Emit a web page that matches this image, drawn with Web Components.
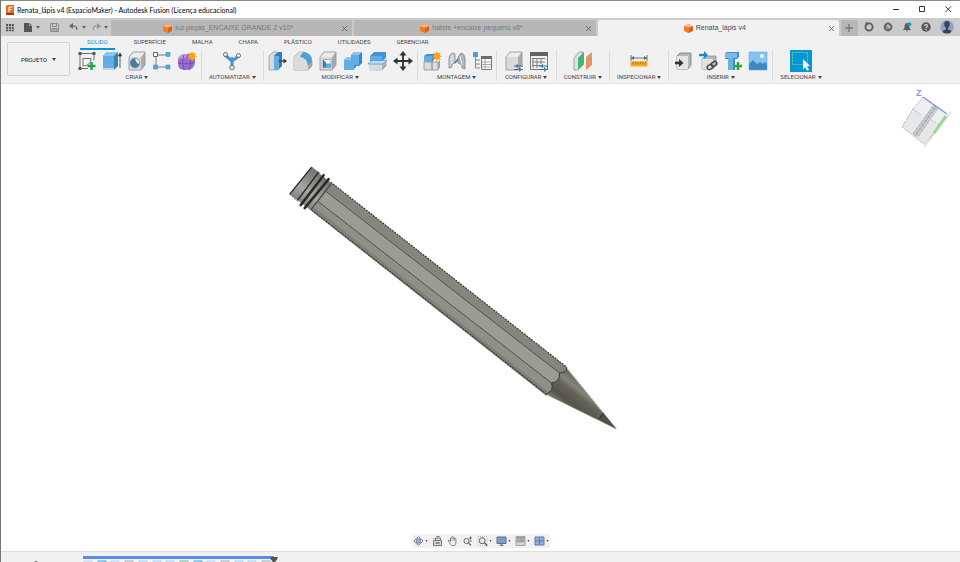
<!DOCTYPE html>
<html lang="pt-BR">
<head>
<meta charset="utf-8">
<title>Renata_lápis v4 (EspacioMaker) - Autodesk Fusion (Licença educacional)</title>
<style>
  html, body { height: 100%; margin: 0; }
  body { font-family: Roboto, "Liberation Sans", sans-serif; font-size: 6px; color: #444; background: #fff; overflow: hidden; }
</style>
</head>
<body>
<fusion-app></fusion-app>

<script>
const cube = (body) => `<path d="M2 6 6 1h12v13l-4 5H2z" fill="#a9abad"/><path d="M2 6h12v13H2z" fill="#d9dadb"/><path d="M2 6 6 1h12l-4 5z" fill="#ececec"/><path d="M2 6 6 1h12v13l-4 5H2z" fill="none" stroke="#8f9294" stroke-width=".8"/>${body || ''}`;
const plus = (x, y) => `<path d="M${x} ${y - 4}v8M${x - 4} ${y}h8" stroke="#22a447" stroke-width="2.4" fill="none"/>`;
const spark = '<path d="M15 0l1.1 2.5 2.6-1-1 2.600 2.300 1.100-2.300 1.100 1 2.600-2.600-1L15 10.400l-1.100-2.500-2.600 1 1-2.600L10 5.200l2.300-1.100-1-2.600 2.600 1z" fill="#f7a416"/>';
const sliders = '<path d="M10 15h9M10 18.500h9" stroke="#606469"/><path d="M14 12.500v5l-2.500-2.500zM15 16v5l3-2.500z" fill="#2f87c8"/>';

/* Each entry: [width, height, markup]; the view box has the same size. */
const ICONS = {
  sketch: [20, 20, '<path d="M3 2.500h14v7M3 2.500v15h8" stroke="#6d7072" fill="none" stroke-width="1"/><path d="M6 15V7.500h8c0 4-3 7.500-8 7.500z" fill="none" stroke="#6d7072"/><path d="M1.500 1h3v3h-3zM15.500 1h3v3h-3zM1.500 16h3v3h-3z" fill="#55585a"/><path d="M14.500 11v8M10.500 15h8" stroke="#22a447" stroke-width="2.400"/>'],
  extrude: [20, 20, '<path d="M1 5 5 1h11v14l-4 4H1z" fill="#3182bd"/><path d="M1 5h11v13H1z" fill="#62aee4"/><path d="M1 5 5 1h11l-4 4z" fill="#8dc6ef"/><path d="M1 17h11v2H1z" fill="#cfd1d2"/><path d="M18 17V3m-1.500 2L18 2l1.500 3z" stroke="#333" fill="#333" stroke-width=".8"/>'],
  hole: [20, 20, cube('<circle cx="8" cy="12" r="4.700" fill="#3c7fb1"/><path d="M8 7.300a4.700 4.700 0 0 1 4.600 5.500C10 13 8.500 10 8 7.300z" fill="#f8fafb"/><circle cx="8" cy="12" r="4.700" fill="none" stroke="#75797b" stroke-width=".7"/>')],
  pattern: [20, 20, '<path d="M4 4h12M4 4v12h12" fill="none" stroke="#777b7e"/><path d="M1.500 1.500h4v4h-4z" fill="#fff" stroke="#666"/><path d="M14 1.500h4v4h-4zM14 14h4v4h-4zM1.500 14h4v4h-4z" fill="#55a9e0" stroke="#3f8fc9" stroke-width=".6"/>'],
  form: [20, 20, '<path d="M1 8c1-4 5-5 9-5 6 0 8 2 8 7 0 6-3 9-9 9S1 17 1 12z" fill="#9a6bd3"/><path d="M1 8c1-4 5-5 9-5-1 3-1 3-2 4z" fill="#bd99e8"/><path d="M1 12c4 1 9 1 16 0M7 4c-2 5-1 10 0 15M12 4c2 5 2 10 0 15" fill="none" stroke="#6e42a8" stroke-width=".8"/>' + spark],
  automate: [20, 20, '<path d="M3 4l7 6 7-5M10 10v7" stroke="#4795cf" stroke-width="3" fill="none"/><path d="M10 6v6" stroke="#4795cf" stroke-width="2"/><g fill="#f7f7f7" stroke="#666"><circle cx="3.500" cy="3.500" r="2"/><circle cx="16.500" cy="4.500" r="2"/><circle cx="10" cy="16.500" r="2.300"/></g>'],
  press: [20, 20, '<path d="M1 5 5 1h4v18H1z" fill="#d7d9da" stroke="#8f9294" stroke-width=".7"/><path d="M6 5l4-4h4v14l-4 4H6z" fill="#2e7fbc"/><path d="M6 5h5v14H6z" fill="#62aee4"/><path d="M11 10h6" stroke="#333" stroke-width="1.200"/><path d="M15.500 7.500v5L19 10z" fill="#333"/>'],
  fillet: [20, 20, '<path d="M1 6 6 1h5q8 2 8 10v4l-4 4H1z" fill="#a9abad" stroke="#8f9294" stroke-width=".7"/><path d="M1 6 6 1h5L7 6q8 1 8 9v4H1z" fill="#dadbdc"/><path d="M10 1q9 1 9 10l-4 3Q14 7 7 5.500z" fill="#4da1dc"/>'],
  shell: [20, 20, cube('<path d="M5 8.500h8v8H5z" fill="#f6f6f6" stroke="#888" stroke-width=".6"/><path d="M5 8.500l3 3v5H5z" fill="#2e7fbc"/><path d="M8 12.500h5v4H8z" fill="#62aee4"/>')],
  combine: [20, 20, '<path d="M1 9l3-3h4V4l3-3h8v11l-3 3h-3v1l-3 3H1z" fill="#3787c6"/><path d="M1 9h7V4h8v10h-5v5H1z" fill="#62aee4"/><path d="M8 4l3-3h8l-3 3zM1 9l3-3h4v3z" fill="#8dc6ef"/>'],
  split: [20, 20, '<path d="M2 5 6 1h12v6l-4 3H2z" fill="#4295d3"/><path d="M2 5h12v4H2z" fill="#62aee4"/><path d="M2 14h12l4-4v5l-4 4H2z" fill="#b0b3b5" stroke="#8f9294" stroke-width=".6"/><path d="M2 14h12v5H2z" fill="#dadbdc"/><path d="M0 13l4-3.500h15L15 13H0z" fill="#b8ddf6" stroke="#4797d0" stroke-width=".7"/>'],
  move: [20, 20, '<path d="M10 3v14M3 10h14" stroke="#2f3234" stroke-width="1.800"/><path d="M10 0l3.500 4.500h-7zM10 20l3.500-4.500h-7zM0 10l4.500-3.500v7zM20 10l-4.500-3.500v7z" fill="#2f3234"/>'],
  component: [20, 20, '<path d="M2 11h8v8H2zM10 11h6v8h-6z" fill="#dcdddd" stroke="#8f9294" stroke-width=".8"/><path d="M16 11l2-2v7l-2 3z" fill="#9fa2a4"/><path d="M2 5l3-2h7v6l-2 2H2z" fill="#3e92d2"/><path d="M2 5h8v6H2z" fill="#62aee4"/>' + spark],
  joint: [20, 20, '<path d="M2 17V7q1-5 5-5l1 2v8l-3 1v3z" fill="#c9ccce" stroke="#888c8f" stroke-width=".9"/><path d="M18 18V7q-1-5-4-5l-3 4v6l4 2v3z" fill="#b3b7b9" stroke="#888c8f" stroke-width=".9"/><path d="M5 5v8M13 5l2 9" stroke="#eee"/><path d="M8 12l3-4" stroke="#2d7dba" stroke-width="1.400"/>'],
  bom: [20, 20, '<path d="M1 1h5v5H1z" fill="#4ba0dc"/><path d="M3.500 6v11H8M3.500 9H8M3.500 13H8" fill="none" stroke="#888"/><path d="M9.500 5.500h10v13h-10z" fill="#fff" stroke="#75797b"/><path d="M9 5h11v3H9z" fill="#696d70"/><path d="M9 11h10M9 13.500h10M9 16h10M13 8v10" stroke="#888" stroke-width=".7"/>'],
  config: [20, 20, cube(sliders)],
  table: [20, 20, '<path d="M1.500 1.500h17v17h-17z" fill="#eee" stroke="#777"/><path d="M1 1h18v4H1z" fill="#5f6366"/><path d="M3 7.500h13M3 11h13M3 14.500h9M4 7v10M8 7v10M12 7v6" stroke="#777" stroke-width=".9"/>' + sliders],
  plane: [20, 20, '<path d="M1 7l5-6h4v13l-5 5H1z" fill="#e0e1e1" stroke="#8f9294" stroke-width=".8"/><path d="M5 7l6-6v12l-6 6z" fill="#48b575"/><path d="M13 6l6-5v13l-6 5z" fill="#e29462"/>'],
  measure: [20, 20, '<path d="M2 4v6M18 4v6M2 7h16" stroke="#606469" stroke-width=".9"/><path d="M5 5L2 7l3 2zM15 5l3 2-3 2z" fill="#606469"/><path d="M1.500 10.500h17v5h-17z" fill="#f9a91a"/><path d="M4 10.500v3M6.500 10.500v2M9 10.500v3M11.500 10.500v2M14 10.500v3M16.500 10.500v2" stroke="#956514" stroke-width=".8"/>'],
  derive: [20, 20, '<path d="M4 5l3-3h11v12l-3 4H4z" fill="#b5b8ba" stroke="#777b7e" stroke-width=".8"/><path d="M4 5h11v13H4z" fill="#e4e5e5"/><path d="M2 12h6" stroke="#333" stroke-width="2.600"/><path d="M6 8v8l4.500-4z" fill="#333"/>'],
  insert: [20, 20, '<path d="M4 8l3-3h11v9l-3 4H4z" fill="#b5b8ba" stroke="#8f9294" stroke-width=".8"/><path d="M4 8h11v10H4z" fill="#dfe0e0"/><path d="M1 4h7" stroke="#1e88d2" stroke-width="2.400"/><path d="M6 0v8l4-4z" fill="#1e88d2"/><g fill="none" stroke="#444" stroke-width="1.400"><rect x="9" y="14" width="6" height="4" rx="2" transform="rotate(-35 12 16)"/><rect x="13" y="11" width="6" height="4" rx="2" transform="rotate(-35 16 13)"/></g>'],
  bolt: [20, 20, '<path d="M2 2l2-1h12v5l-2 2H2z" fill="#4390cd"/><path d="M2 2h12v5H2z" fill="#79bbe8"/><path d="M5 7h7v12H5z" fill="#69b1e2"/><path d="M10 7h2v12h-2z" fill="#3e8dc8"/>' + plus(15, 15)],
  image: [20, 20, '<path d="M1 1h18v18H1z" fill="#82c3f2"/><path d="M1 13l4-4 4 4 3-2 3 2 2-2 2 2v6H1z" fill="#3c8ac4"/><circle cx="14" cy="5" r="2" fill="#fff5c5"/><path d="M1 1h18v18H1z" fill="none" stroke="#65a9da" stroke-width=".6"/>'],
  select: [22, 22, '<path d="M0 0h22v22H0z" fill="#0696d7"/><path d="M2.500 2.500h15v12h-15z" fill="none" stroke="#5fd08c" stroke-dasharray="2 1"/><path d="M13 9l7 7-3 .3 2 3.400-2 1-1.800-3.500L13 19.500z" fill="#fff"/>'],
  app: [8, 10, '<path d="M1 0h7v10H0V1z" fill="#ef6a1a"/><path d="M0 8h8v2H0z" fill="#9b3d08"/><path d="M3 2h3.500M3 2v5M3 4.500h2.500" stroke="#fff" stroke-width="1.200" fill="none"/>'],
  doc: [9, 9, '<path d="M0 2.200 4.500 0 9 2.200v4.600L4.500 9 0 6.800z" fill="#f08c45"/><path d="M0 2.200 5 3.400V9L0 6.800z" fill="#f47b2a"/><path d="M5 3.400l4-1.200v4.600L5 9z" fill="#d9621c"/><path d="M0 2.200 4.500 0 9 2.200 5 3.400z" fill="#ffb27a"/>'],
  grid: [9, 9, '<path d="M1 2h8M1 4.700h8M1 7.400h8" stroke="#555" stroke-width="1.900" stroke-dasharray="2.100 .8"/>'],
  file: [8, 9, '<path d="M0 0h5v3h3v6H0zM5.600 0L8 2.400H5.600z" fill="#555"/>'],
  save: [9, 9, '<path d="M.5.500h7l1 1v7h-8zM2.500 1v2.500h4V1M2 8V5.500h5V8M2 6.800h5" fill="none" stroke="#8c8c8c"/>'],
  undo: [9, 8, '<path d="M3 3h2.500Q8 3.500 8 7" fill="none" stroke="#666" stroke-width="1.200"/><path d="M4 0v6L0 3z" fill="#666"/>'],
  redo: [9, 8, '<path d="M6 3H3.500Q1 3.500 1 7" fill="none" stroke="#969696" stroke-width="1.100"/><path d="M5 0v6l4-3z" fill="#969696"/>'],
  close: [7, 7, '<path d="M1 1l5 5M6 1L1 6" stroke="#666" stroke-width=".9"/>'],
  add: [8, 8, '<path d="M4 0v8M0 4h8" stroke="#777" stroke-width="1.400"/>'],
  sync: [10, 10, '<circle cx="5" cy="5" r="3.600" fill="none" stroke="#5c5c5c" stroke-width="1.800"/><path d="M1 .5h4L3 4z" fill="#5c5c5c"/><path d="M4 3l3 2" stroke="#cbcbcb"/>'],
  clock: [10, 10, '<circle cx="5" cy="5" r="4.400" fill="#666"/><circle cx="5" cy="5" r="2.500" fill="#8c8c8c"/><path d="M5 2.500V5h2.500" stroke="#ddd" fill="none"/>'],
  bell: [10, 10, '<path d="M1 8l1.500-2V4Q3 1 5 1t2.500 3v2L9 8zM4 8.500h2L5 10z" fill="#5c5c5c"/><circle cx="7.500" cy="2.200" r="1.900" fill="#1399dc"/>'],
  help: [10, 10, '<circle cx="5" cy="5" r="4.700" fill="#5a5a5a"/><path d="M3.500 4Q3.500 2.500 5 2.500T6.500 4Q6.500 4.700 5 5.500v.8M5 7v1.200" fill="none" stroke="#e2e2e2" stroke-width="1.100"/>'],
  avatar: [14, 14, '<circle cx="7" cy="7" r="6.700" fill="#8fa3be"/><path d="M2.500 12Q3 9.800 6 9.500V8.200Q4 7 4.200 3.800 4.500 1 7 1t2.800 2.800Q10 7 8 8.200v1.300q3 .3 3.500 2.500Q7 15.200 2.500 12z" fill="#34445d"/>'],
  min: [7, 7, '<path d="M0 3.500h6" stroke="#333"/>'],
  max: [7, 7, '<path d="M.5.500h5v5h-5z" fill="none" stroke="#333"/>'],
  exit: [7, 7, '<path d="M.5.500l5.500 5.500M6 .5L.5 6" stroke="#333"/>'],
  orbit: [10, 10, '<ellipse cx="5" cy="5" rx="4.300" ry="2" fill="none" stroke="#6b7075" stroke-width=".9"/><ellipse cx="5" cy="5" rx="1.800" ry="4.300" fill="none" stroke="#6b7075" stroke-width=".9"/><circle cx="5" cy="5" r="1.500" fill="#78b5e8"/>'],
  lookat: [10, 10, '<path d="M1 4.500h8v5H1zM3 4V2h5v2M1 2.500h1M4 .5h3" fill="#ddd" stroke="#777" /><path d="M3 6h4v2H3z" fill="#888"/>'],
  pan: [10, 10, '<path d="M3 8L.8 5q0-1 1-.8L3 5.500V2q.7-1 1.300 0V1q.8-1 1.400 0v1q.8-1 1.400 0v1q.9-1 1.300 0v3.500q0 2-1.200 3H4.300z" fill="#f4f4f4" stroke="#666" stroke-width=".8"/><path d="M4.400 2v3M5.800 2v3M7.200 3v2" stroke="#777" stroke-width=".5"/>'],
  zoom: [10, 10, '<circle cx="4" cy="5" r="2.600" fill="#e9f1f7" stroke="#666"/><path d="M6 7l2.500 2.500" stroke="#666" stroke-width="1.300"/><path d="M8 .5v3M6.500 2h3M7 5h2.500" stroke="#456" stroke-width=".8"/>'],
  fit: [10, 10, '<path d="M.5.500h9v9h-9z" fill="none" stroke="#999" stroke-width=".6" stroke-dasharray="1 1"/><circle cx="4.700" cy="4.700" r="3" fill="#dcebdc" stroke="#666"/><path d="M7 7l2.800 2.800" stroke="#555" stroke-width="1.300"/>'],
  display: [10, 10, '<path d="M.5 1h9v6.500h-9z" fill="#7c9fd0" stroke="#5e6e82"/><path d="M3 9.300h4M5 7.500v2" stroke="#666"/>'],
  gridset: [10, 10, '<path d="M.5.500h9v9h-9z" fill="#d9d9d9" stroke="#888" stroke-width=".7"/><path d="M1 1h8v5H1z" fill="#9a9a9a"/><path d="M3.500.500v9M6.500.500v9M.5 3.500h9M.5 6.500h9" stroke="#bbb" stroke-width=".6"/>'],
  views: [10, 10, '<path d="M.5 1h9v8h-9z" fill="#8fb0dc" stroke="#5d7ba6"/><path d="M5 1v8M.5 5h9" stroke="#5d7ba6"/>']
};

const define = (name, html, setup) => {
  const template = document.createElement('template');
  template.innerHTML = html;
  customElements.define(name, class extends HTMLElement {
    connectedCallback() {
      if (this.shadowRoot) return;
      this.attachShadow({ mode: 'open' }).append(template.content.cloneNode(true));
      if (setup) setup(this, this.shadowRoot);
    }
  });
};
const reset = `button { font: inherit; color: inherit; background: none; border: 0; padding: 0; margin: 0; display: inline-flex; align-items: center; justify-content: center; white-space: nowrap; }`;

define('ui-icon', `<style>:host { display: inline-flex; flex: none; } svg { display: block; overflow: visible; }</style>`, (host, root) => {
  const [w, h, body] = ICONS[host.getAttribute('name')];
  root.innerHTML += `<svg width="${w}" height="${h}" viewBox="0 0 ${w} ${h}" aria-hidden="true">${body}</svg>`;
});

define('ui-caret', `<style>:host { display: inline-block; flex: none; border: 2px solid transparent; border-top: 3px solid currentColor; border-bottom: 0; }</style>`);

define('title-bar', `<style>
  :host { display: flex; align-items: center; height: 17px; padding: 0 8px 0 5px; gap: 3px; background: #fff; border-top: 1px solid #8a8a8a; color: #000; }
  h1 { flex: 1; margin: 0; font: 400 7px/10px Lato, "Noto Sans", sans-serif; }
  nav { display: flex; gap: 19px; } ${reset}</style>
  <ui-icon name="app"></ui-icon><h1><slot></slot></h1>
  <nav><button aria-label="Minimizar"><ui-icon name="min"></ui-icon></button><button aria-label="Maximizar"><ui-icon name="max"></ui-icon></button><button aria-label="Fechar"><ui-icon name="exit"></ui-icon></button></nav>`);

define('doc-tab', `<style>
  :host { display: flex; flex: 1; align-items: center; padding: 0 4px; background: #b7b7b7; color: #777; border-radius: 2px 2px 0 0; font: 7px/10px "Liberation Sans", Arial, sans-serif; }
  :host([active]) { background: #f1f1f1; color: #4b4b4b; } ${reset}
  .label { flex: 1; gap: 3px; }</style>
  <button class="label"><ui-icon name="doc"></ui-icon><span><slot></slot></span></button><button aria-label="Fechar guia"><ui-icon name="close"></ui-icon></button>`);

define('document-bar', `<style>
  :host { display: flex; height: 16px; padding-top: 2px; background: #cbcbcb; gap: 2px; color: #666; }
  .quick, .tools { display: flex; align-items: center; }
  .quick { flex: none; width: 104px; padding: 0 0 2px 4px; }
  .quick button { gap: 4px; margin-right: 10px; } .quick button:nth-child(4) { margin-right: 6px; } .quick button:last-child { margin: 0; gap: 3px; }
  .new { width: 17px; background: #b7b7b7; border-radius: 2px 2px 0 0; }
  .tools { gap: 9px; padding: 0 6px 2px 4px; } ${reset}</style>
  <div class="quick"><button aria-label="Painel de dados"><ui-icon name="grid"></ui-icon></button><button aria-label="Arquivo"><ui-icon name="file"></ui-icon><ui-caret></ui-caret></button><button aria-label="Salvar"><ui-icon name="save"></ui-icon></button><button aria-label="Desfazer"><ui-icon name="undo"></ui-icon><ui-caret></ui-caret></button><button aria-label="Refazer"><ui-icon name="redo"></ui-icon><ui-caret></ui-caret></button></div>
  <slot></slot>
  <button class="new" aria-label="Novo projeto"><ui-icon name="add"></ui-icon></button>
  <div class="tools"><button aria-label="Extensões"><ui-icon name="sync"></ui-icon></button><button aria-label="Status do trabalho"><ui-icon name="clock"></ui-icon></button><button aria-label="Notificações"><ui-icon name="bell"></ui-icon></button><button aria-label="Ajuda"><ui-icon name="help"></ui-icon></button><button aria-label="Conta"><ui-icon name="avatar"></ui-icon></button></div>`);

define('tool-group', `<style>
  :host { display: flex; flex-direction: column; align-items: center; padding: 0 7px; border-right: 1px solid #dcdcdc; }
  :host([wide]) { padding: 0 4px; } :host(:last-of-type) { border: 0; }
  .icons { display: flex; gap: 5px; height: 22px; align-items: center; }
  ${reset} .name { gap: 2px; line-height: 8px; margin-top: 1px; }</style>
  <div class="icons"></div><button class="name"><span><slot></slot></span><ui-caret></ui-caret></button>`, (host, root) => {
  root.querySelector('.icons').innerHTML = host.getAttribute('icons').split(' ').map(n => `<button aria-label="${n}"><ui-icon name="${n}"></ui-icon></button>`).join('');
});

define('ribbon-tab', `<style>
  :host { display: block; } ${reset}
  button { line-height: 8px; height: 13px; align-items: flex-start; padding-top: 1px; }
  :host([active]) button { color: #0696d7; border-bottom: 2px solid #0696d7; padding-left: 7px; padding-right: 7px; margin: 0 -7px; }</style>
  <button><slot></slot></button>`);

define('tool-ribbon', `<style>
  :host { display: flex; background: #f1f1f1; padding: 1px 6px 2px; border-bottom: 1px solid #e3e3e3; gap: 3px; }
  ${reset}
  .workspace { width: 63px; height: 34px; margin-top: 5px; border: 1px solid #d3d3d3; border-radius: 2px; gap: 5px; font-weight: 500; flex: none; box-sizing: border-box; }
  .tabs { display: flex; gap: 26px; padding-left: 14px; }
  .groups { display: flex; }</style>
  <button class="workspace">PROJETO <ui-caret></ui-caret></button>
  <div><div class="tabs"><slot name="tab"></slot></div><div class="groups"><slot></slot></div></div>`);

define('view-cube', `<style>:host { display: block; } svg { display: block; overflow: visible; } text { font: 700 9px "Liberation Sans", Arial, sans-serif; }</style>
  <svg width="60" height="60" viewBox="896 88 60 60" role="img" aria-label="ViewCube">
    <path d="M951 112 924 147" stroke="#dedede" stroke-width="1.500"/>
    <path d="M923 97 947 115 924 144 902 127 913 109z" fill="#eeeff0"/>
    <path d="M913 109 938 127 924 144 902 127z" fill="#e6e7e8"/>
    <path d="M923 97 913 109 902 127 924 144 934 133M913 109 921 115M929 119 941 126" fill="none" stroke="#b4b7ba" stroke-dasharray="2 1"/>
    <path d="M936 106 915 136" stroke="#cdd0d2" stroke-width="6"/>
    <path d="M938 108 918 137M933 106 913 134" stroke="#a3a7ab" stroke-width="1" stroke-dasharray="1 1 2 1"/>
    <path d="M936 106 915 136" stroke="#a3a7ab" stroke-width="2" stroke-dasharray="1 1 2 1"/>
    <path d="M923 97 947 114" stroke="#8a8ee8" stroke-width="1.500"/><path d="M946 116 934 133" fill="none" stroke="#8ce08c" stroke-width="3"/><path d="M929 138 933 135" stroke="#e8b3b3"/>
    <text x="916" y="96" fill="#8f93ee">Z</text>
  </svg>`);

define('pencil-model', `<style>:host { display: block; width: 100%; height: 100%; } svg { display: block; width: 100%; height: 100%; }</style>
  <svg viewBox="0 84 960 467" role="img" aria-label="Modelo 3D do lápis">
    <defs>
      <linearGradient id="cone" gradientUnits="userSpaceOnUse" x1="583" y1="384" x2="565" y2="407"><stop offset="0" stop-color="#6d6c62"/><stop offset=".25" stop-color="#85847a"/><stop offset=".42" stop-color="#65645b"/><stop offset=".8" stop-color="#55544c"/><stop offset="1" stop-color="#77766d"/></linearGradient>
      <linearGradient id="cap" gradientUnits="userSpaceOnUse" x1="314" y1="169" x2="292" y2="199"><stop offset="0" stop-color="#73746f"/><stop offset=".35" stop-color="#8e8f8a"/><stop offset=".6" stop-color="#a8a9a4"/><stop offset="1" stop-color="#7b7c77"/></linearGradient>
    </defs>
    <path d="M566 368 616 429 547 395 545 385z" fill="url(#cone)"/>
    <path d="M603 413 616 429 599 419z" fill="#504f48"/><path d="M603 413 598.500 419" stroke="#282824"/>
    <path d="M330 182 566 367Q567 373 559 373L324 191z" fill="#85867e"/>
    <path d="M325 190 559 373Q560 382 551 383L317 201z" fill="#9b9c94"/>
    <path d="M317 201 551 383Q554 391 547 393L313 208z" fill="#8f9189"/>
    <path d="M313 207 547 391 546 396 311 211z" fill="#7f8179"/>
    <path d="M566 367Q567 373 559 373 560 382 551 383 554 391 546 394" fill="none" stroke="#373833"/>
    <path d="M325 191 559 373M317 201 551 383" fill="none" stroke="#4a4b46" stroke-width="1"/>
    <path d="M330 182 566 367M311 210 547 395" fill="none" stroke="#393a35" stroke-width="1.200" stroke-dasharray="2 1"/>
    <path d="M566 367 616 429 547 395" fill="none" stroke="#77766d" stroke-width=".7" stroke-dasharray="1 1"/>
    <path d="M311 167 331 183 311 211 289 194z" fill="url(#cap)"/>
    <path d="M318 172 297 200" stroke="#292a26" stroke-width="1.500"/>
    <path d="M323 175 300 205M328 179 304 208" stroke="#292a26" stroke-width="2.500" stroke-linecap="round" fill="none"/>
    <path d="M331 183 310 210" stroke="#4b4c47" stroke-width="1.500"/>
    <path d="M289 194 311 167" stroke="#252622" stroke-width="1.300"/><path d="M311 167 319 173M289 194 298 202" stroke="#555650" stroke-width="1" stroke-dasharray="2 1"/>
  </svg>`);

define('nav-bar', `<style>:host { display: flex; align-items: center; gap: 5px; height: 14px; padding: 0 1px; background: #f1f1f1; color: #444; } ${reset} button { gap: 2px; } ui-caret { border-width: 2px 1px 0; } </style>
  <slot></slot>`, (host, root) => {
  const items = [['orbit', 1], ['lookat'], ['pan'], ['zoom'], ['fit', 1], ['display', 1], ['gridset', 1], ['views', 1]];
  root.innerHTML += items.map(([n, menu]) => `<button aria-label="${n}"><ui-icon name="${n}"></ui-icon>${menu ? '<ui-caret></ui-caret>' : ''}</button>`).join('');
});

define('model-view', `<style>
  :host { display: block; position: relative; flex: 1; min-height: 0; background: #fff; }
  view-cube { position: absolute; top: 4px; right: 4px; }
  nav-bar { position: absolute; bottom: 3px; left: 50%; transform: translateX(-50%); }</style>
  <pencil-model></pencil-model><view-cube></view-cube><nav-bar></nav-bar>`);

define('time-line', `<style>
  :host { display: block; height: 10px; border-top: 1px solid #dedede; background: #f1f1f1; overflow: hidden; }
  svg { display: block; overflow: visible; }</style>
  <svg width="300" height="10" role="img" aria-label="Linha do tempo">
    <path d="M82 4h191v3H82z" fill="#5a8de6"/>
    <g fill="#e3edf5"></g>
    <path d="M269 5h8l-1 2.500-2 2.500h-2l-2-2.500z" fill="#555"/><path d="M33 10l2-1 2 1z" fill="#555"/>
  </svg>`, (host, root) => {
  const colors = ['#b6cfe2', '#47a1df', '#b6cfe2', '#aaa', '#a9cce5', '#a9cce5', '#a9cce5', '#80b58c', '#47a1df', '#b6cfe2', '#aaa', '#a9cce5', '#a9cce5', '#aaa'];
  root.querySelector('g').innerHTML = colors.map((c, i) => `<path d="M${83 + Math.round(i * 13.7)} 10v-1h8v1" stroke="${c}"/>`).join('');
});

define('fusion-app', `<style>:host { display: flex; flex-direction: column; height: 100vh; box-sizing: border-box; border-left: 1px solid #777; }</style>
  <title-bar>Renata_lápis v4 (EspacioMaker) - Autodesk Fusion (Licença educacional)</title-bar>
  <document-bar><doc-tab>luz peças_ENCAIXE GRANDE 2 v10*</doc-tab><doc-tab>hatste +encaixe pequeno v8*</doc-tab><doc-tab active>Renata_lápis v4</doc-tab></document-bar>
  <tool-ribbon>
    <ribbon-tab slot="tab" active>SÓLIDO</ribbon-tab><ribbon-tab slot="tab">SUPERFÍCIE</ribbon-tab><ribbon-tab slot="tab">MALHA</ribbon-tab><ribbon-tab slot="tab">CHAPA</ribbon-tab><ribbon-tab slot="tab">PLÁSTICO</ribbon-tab><ribbon-tab slot="tab">UTILIDADES</ribbon-tab><ribbon-tab slot="tab">GERENCIAR</ribbon-tab>
    <tool-group wide icons="sketch extrude hole pattern form">CRIAR</tool-group>
    <tool-group icons="automate">AUTOMATIZAR</tool-group>
    <tool-group wide icons="press fillet shell combine split move">MODIFICAR</tool-group>
    <tool-group wide icons="component joint bom">MONTAGEM</tool-group>
    <tool-group icons="config table">CONFIGURAR</tool-group>
    <tool-group icons="plane">CONSTRUIR</tool-group>
    <tool-group icons="measure">INSPECIONAR</tool-group>
    <tool-group wide icons="derive insert bolt image">INSERIR</tool-group>
    <tool-group icons="select">SELECIONAR</tool-group>
  </tool-ribbon>
  <model-view></model-view>
  <time-line></time-line>`);
</script>
</body>
</html>
